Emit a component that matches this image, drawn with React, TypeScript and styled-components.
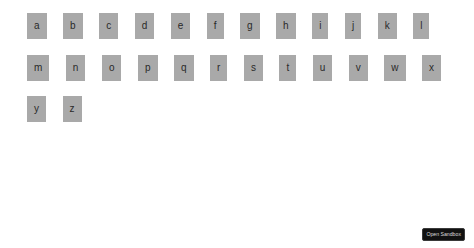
import React from 'react';
import styled, { createGlobalStyle } from 'styled-components';

const GlobalStyle = createGlobalStyle`
  html, body {
    margin: 0;
    padding: 0;
    background: #fff;
  }
  body {
    font-family: "Liberation Sans", Arial, sans-serif;
  }
`;

const Grid = styled.div`
  display: flex;
  flex-wrap: wrap;
  align-content: flex-start;
  column-gap: 16.5px;
  row-gap: 15.6px;
  padding: 13.3px 20px 0 27px;
  max-width: 474px;
  box-sizing: border-box;
`;

const Tile = styled.div`
  background: #a9a9a9;
  color: #2a2a2a;
  font-size: 10px;
  line-height: 12px;
  padding: 7px;
  text-align: center;
`;

const SandboxButton = styled.button`
  position: fixed;
  right: 9px;
  bottom: 7px;
  height: 13px;
  padding: 0 3px;
  border: 1px solid #3a3a3a;
  border-radius: 2px;
  background: #111;
  color: #ddd;
  font-family: "Liberation Sans", Arial, sans-serif;
  font-size: 5.2px;
  line-height: 11px;
  cursor: pointer;
`;

const letters = 'abcdefghijklmnopqrstuvwxyz'.split('');

const App = () => {
  return (
    <>
      <GlobalStyle />
      <Grid>
        {letters.map((letter) => (
          <Tile key={letter}>{letter}</Tile>
        ))}
      </Grid>
      <SandboxButton>Open Sandbox</SandboxButton>
    </>
  );
};

export default App;
